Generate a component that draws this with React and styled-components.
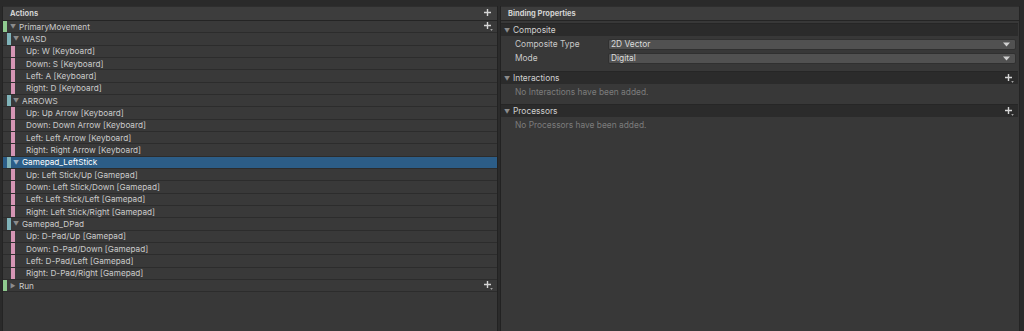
import React from 'react';
import styled, { createGlobalStyle } from 'styled-components';

const GlobalStyle = createGlobalStyle`
  html, body {
    margin: 0;
    padding: 0;
    background: #2a2a2a;
    font-family: Inter, "Noto Sans", "DejaVu Sans", sans-serif;
  }
`;

const Window = styled.div`
  display: flex;
  height: 331px;
  box-sizing: border-box;
  padding: 6px 4px 0 2px;
  overflow: hidden;
`;

const LeftPanel = styled.div`
  width: 495px;
  display: flex;
  flex-direction: column;
  background: #383838;
  border-left: 1px solid #242424;
  box-sizing: border-box;
`;

const Divider = styled.div`
  width: 2px;
  background: #2b2b2b;
  border-left: 1px solid #222;
  border-right: 1px solid #222;
`;

const RightPanel = styled.div`
  flex: 1;
  display: flex;
  flex-direction: column;
  background: #383838;
  border-right: 1px solid #242424;
`;

const PanelHeader = styled.div`
  height: 15px;
  box-sizing: border-box;
  display: flex;
  align-items: center;
  justify-content: space-between;
  padding: 0 4px 0 ${p => p.$pad || 7}px;
  background: #3d3d3d;
  border-top: 1px solid #2e2e2e;
  border-bottom: 1px solid #242424;
  color: #d2d2d2;
  font-size: 7.5px;
  font-weight: 700;
`;

const Row = styled.div`
  height: 12.33px;
  box-sizing: border-box;
  display: flex;
  align-items: center;
  padding-right: 4px;
  background: ${p => (p.$selected ? '#2c5d87' : '#393939')};
  border-bottom: 1px solid #2c2c2c;
  color: ${p => (p.$selected ? '#ffffff' : '#cbcbcb')};
  font-size: 8.2px;
  white-space: nowrap;
`;

const Bar = styled.span`
  width: 4px;
  align-self: stretch;
  margin-left: ${p => p.$indent}px;
  background: ${p => p.$color};
  flex-shrink: 0;
`;

const Arrow = styled.span`
  width: 9px;
  margin-left: ${p => p.$gap ?? 3}px;
  font-size: 6px;
  color: ${p => (p.$selected ? '#9fb4c8' : '#8c8c8c')};
  flex-shrink: 0;
`;

const Label = styled.span`
  flex: 1;
  margin-left: ${p => p.$gap || 0}px;
`;

const Filler = styled.div`
  flex: 1;
  background: #383838;
`;

const Foldout = styled.div`
  height: 13px;
  box-sizing: border-box;
  display: flex;
  align-items: center;
  margin: ${p => p.$top || 0}px 1px 0 0;
  padding: 0 4px 0 3px;
  background: #2b2b2b;
  border-top: 1px solid #262626;
  color: #d0d0d0;
  font-size: 8.4px;
`;

const PropRow = styled.div`
  display: flex;
  align-items: center;
  height: 14px;
  padding-left: 14px;
  margin-top: ${p => p.$top || 0}px;
  color: #c8c8c8;
  font-size: 8.4px;
`;

const PropLabel = styled.span`
  width: 93px;
`;

const Dropdown = styled.div`
  flex: 1;
  height: 11px;
  box-sizing: border-box;
  margin-right: 3px;
  display: flex;
  align-items: center;
  justify-content: space-between;
  padding: 0 5px 0 2px;
  background: #515151;
  border: 1px solid #303030;
  border-radius: 2px;
  color: #dcdcdc;
`;

const Note = styled.div`
  height: 20px;
  box-sizing: border-box;
  padding: 0 0 4px 14px;
  display: flex;
  align-items: center;
  color: #7c7c7c;
  font-size: 8.4px;
`;

const Plus = ({ more }) => (
  <svg width="10" height="9" viewBox="0 0 10 9">
    <path d="M1 3.5H8M4.5 0V7" stroke="#d6d6d6" strokeWidth="1.4" />
    {more && <path d="M7.2 7.3H9.8L8.5 8.7Z" fill="#c8c8c8" />}
  </svg>
);

const Caret = () => (
  <svg width="7" height="5" viewBox="0 0 7 5">
    <path d="M0 0.5H7L3.5 4.5Z" fill="#d0d0d0" />
  </svg>
);

const ACTION = '#8fca8f';
const COMPOSITE = '#7fb3b9';
const BINDING = '#d595b4';

const composites = [
  {
    name: 'WASD',
    parts: ['Up: W [Keyboard]', 'Down: S [Keyboard]', 'Left: A [Keyboard]', 'Right: D [Keyboard]'],
  },
  {
    name: 'ARROWS',
    parts: [
      'Up: Up Arrow [Keyboard]',
      'Down: Down Arrow [Keyboard]',
      'Left: Left Arrow [Keyboard]',
      'Right: Right Arrow [Keyboard]',
    ],
  },
  {
    name: 'Gamepad_LeftStick',
    selected: true,
    parts: [
      'Up: Left Stick/Up [Gamepad]',
      'Down: Left Stick/Down [Gamepad]',
      'Left: Left Stick/Left [Gamepad]',
      'Right: Left Stick/Right [Gamepad]',
    ],
  },
  {
    name: 'Gamepad_DPad',
    parts: [
      'Up: D-Pad/Up [Gamepad]',
      'Down: D-Pad/Down [Gamepad]',
      'Left: D-Pad/Left [Gamepad]',
      'Right: D-Pad/Right [Gamepad]',
    ],
  },
];

const App = () => (
  <>
    <GlobalStyle />
    <Window>
      <LeftPanel>
        <PanelHeader>
          <span>Actions</span>
          <Plus />
        </PanelHeader>
        <Row>
          <Bar $indent={0} $color={ACTION} />
          <Arrow>▼</Arrow>
          <Label>PrimaryMovement</Label>
          <Plus more />
        </Row>
        {composites.map(c => (
          <React.Fragment key={c.name}>
            <Row $selected={c.selected}>
              <Bar $indent={4} $color={COMPOSITE} />
              <Arrow $gap={2} $selected={c.selected}>▼</Arrow>
              <Label>{c.name}</Label>
            </Row>
            {c.parts.map(p => (
              <Row key={p}>
                <Bar $indent={8} $color={BINDING} />
                <Label $gap={11}>{p}</Label>
              </Row>
            ))}
          </React.Fragment>
        ))}
        <Row>
          <Bar $indent={0} $color={ACTION} />
          <Arrow>▶</Arrow>
          <Label>Run</Label>
          <Plus more />
        </Row>
        <Filler />
      </LeftPanel>
      <Divider />
      <RightPanel>
        <PanelHeader $pad={7}>
          <span>Binding Properties</span>
        </PanelHeader>
        <Foldout $top={2}>
          <Arrow $gap={0}>▼</Arrow>
          <Label>Composite</Label>
        </Foldout>
        <PropRow $top={1}>
          <PropLabel>Composite Type</PropLabel>
          <Dropdown>
            <span>2D Vector</span>
            <Caret />
          </Dropdown>
        </PropRow>
        <PropRow>
          <PropLabel>Mode</PropLabel>
          <Dropdown>
            <span>Digital</span>
            <Caret />
          </Dropdown>
        </PropRow>
        <Foldout $top={6}>
          <Arrow $gap={0}>▼</Arrow>
          <Label>Interactions</Label>
          <Plus more />
        </Foldout>
        <Note>No Interactions have been added.</Note>
        <Foldout>
          <Arrow $gap={0}>▼</Arrow>
          <Label>Processors</Label>
          <Plus more />
        </Foldout>
        <Note>No Processors have been added.</Note>
      </RightPanel>
    </Window>
  </>
);

export default App;
